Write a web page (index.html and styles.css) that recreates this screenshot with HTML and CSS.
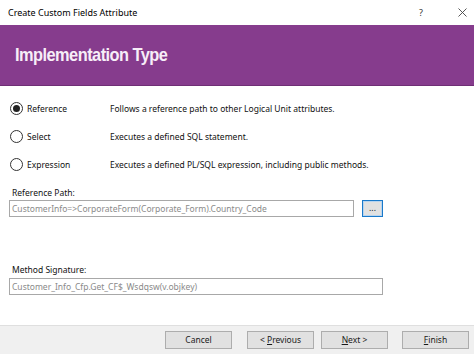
FILE: index.html
```html
<!DOCTYPE html>
<html>
<head>
<meta charset="utf-8">
<link rel="stylesheet" href="styles.css">
</head>
<body>
<div class="dialog">
  <div class="titlebar">
    <span class="title">Create Custom Fields Attribute</span>
    <span class="tb-help">?</span>
    <span class="tb-close">
      <svg width="9" height="9" viewBox="0 0 9 9"><path d="M0.5 0.5 L8.5 8.5 M8.5 0.5 L0.5 8.5" stroke="#444" stroke-width="0.9" fill="none"/></svg>
    </span>
  </div>
  <div class="banner"><h1 class="banner-title">Implementation Type</h1></div>
  <div class="content">
    <div class="options">
      <div class="option">
        <span class="radio checked"></span><span class="opt-label">Reference</span>
        <span class="opt-desc">Follows a reference path to other Logical Unit attributes.</span>
      </div>
      <div class="option">
        <span class="radio"></span><span class="opt-label">Select</span>
        <span class="opt-desc">Executes a defined SQL statement.</span>
      </div>
      <div class="option">
        <span class="radio"></span><span class="opt-label">Expression</span>
        <span class="opt-desc">Executes a defined PL/SQL expression, including public methods.</span>
      </div>
    </div>
    <div class="field field-ref">
      <div class="field-label">Reference Path:</div>
      <div class="field-row">
        <div class="input input-ref">CustomerInfo=&gt;CorporateForm(Corporate_Form).Country_Code</div>
        <div class="btn-browse">...</div>
      </div>
    </div>
    <div class="field field-method">
      <div class="field-label">Method Signature:</div>
      <div class="input input-method">Customer_Info_Cfp.Get_CF$_Wsdqsw(v.objkey)</div>
    </div>
  </div>
  <div class="footer">
    <div class="btn">Cancel</div>
    <div class="btn btn-prev">&lt; <u>P</u>revious</div>
    <div class="btn btn-next"><u>N</u>ext &gt;</div>
    <div class="btn btn-finish"><u>F</u>inish</div>
  </div>
</div>
</body>
</html>
```
FILE: styles.css
```css
* { box-sizing: border-box; }
html, body { margin: 0; padding: 0; }
body {
  width: 474px;
  height: 354px;
  overflow: hidden;
  background: #ffffff;
  font-family: "Noto Sans", "Open Sans", sans-serif;
  font-size: 8.5px;
  color: #111;
}
.dialog { display: flex; flex-direction: column; height: 354px; }
.titlebar {
  height: 25px;
  display: flex;
  align-items: center;
  padding-left: 8px;
  font-size: 9px;
  color: #000;
}
.title { flex: 1; }
.tb-help { width: 6px; margin-right: 33px; font-size: 9px; color: #333; }
.tb-close { width: 9px; margin-right: 7px; display: flex; }
.banner {
  height: 61px;
  background: #863c8d;
  border-bottom: 1px solid #6f2f75;
  display: flex;
  align-items: center;
  padding-left: 15px;
}
.banner-title {
  margin: 0;
  font-family: "Liberation Sans", Arial, sans-serif;
  font-weight: bold;
  font-size: 19px;
  color: #f7eef8;
  letter-spacing: -0.6px;
  transform: scaleX(0.86);
  transform-origin: left center;
}
.content { flex: 1; padding: 15px 0 0 10px; }
.options { display: flex; flex-direction: column; gap: 13px; }
.option { display: flex; align-items: center; height: 15px; }
.radio {
  width: 13px; height: 13px;
  border: 1px solid #333;
  border-radius: 50%;
  margin-right: 4px;
  display: flex; align-items: center; justify-content: center;
  background: #fff;
}
.radio.checked::after {
  content: "";
  width: 7px; height: 7px; border-radius: 50%; background: #222;
}
.opt-label { width: 83px; }
.field-ref { margin-top: 14px; }
.field-label { height: 14px; line-height: 14px; margin-left: 2px; }
.field-row { display: flex; align-items: center; margin-top: 0; }
.input {
  height: 17px;
  border: 1px solid #a8a8a8;
  color: #8a8a8a;
  padding-left: 2px;
  line-height: 15px;
  white-space: nowrap;
  overflow: hidden;
}
.input-ref { width: 345px; margin-left: -1px; }
.btn-browse {
  width: 21px; height: 17px;
  margin-left: 8px;
  margin-top: -1px;
  border: 1px solid #1979ca;
  background: #e1e1e1;
  box-shadow: inset 0 0 0 1px #b7d4ef;
  text-align: center;
  line-height: 14px;
}
.field-method { margin-top: 46px; }
.input-method { width: 374px; margin-top: 1px; margin-left: -1px; }
.footer {
  height: 29px;
  background: #f0f0f0;
  border-top: 1px solid #dfdfdf;
  display: flex;
  align-items: flex-start;
  padding: 5px 0 0 165px;
}
.btn {
  width: 67px; height: 18px;
  border: 1px solid #adadad;
  background: #e1e1e1;
  text-align: center;
  line-height: 16px;
  color: #1a1a1a;
}
.btn-prev { margin-left: 15px; }
.btn-next { margin-left: 7px; }
.btn-finish { margin-left: 14px; }
```
